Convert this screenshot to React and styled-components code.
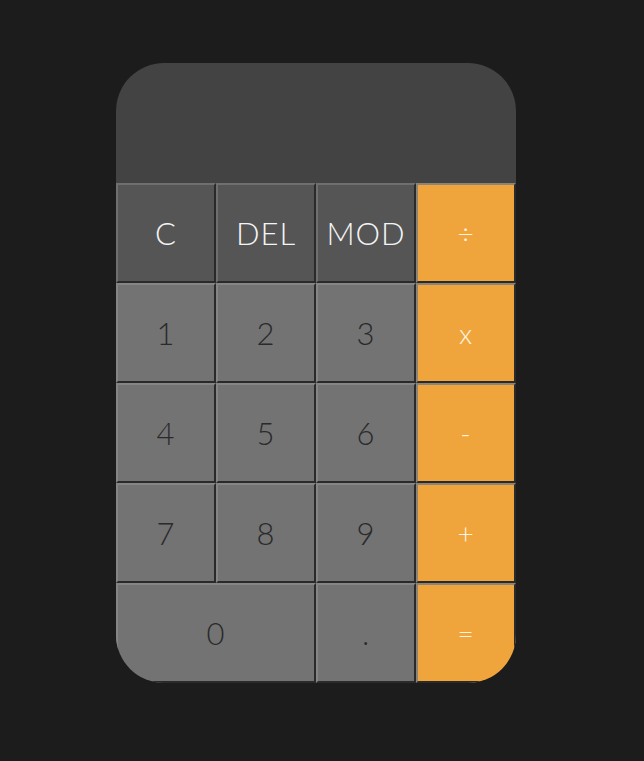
import styled, { createGlobalStyle } from 'styled-components'

const GlobalStyle = createGlobalStyle`
    html, body {
        margin: 0;
        padding: 0;
        background-color: #1c1c1c;
        font-family: "Lato", "Noto Sans", sans-serif;
    }
`

const colors = {
    page: '#1c1c1c',
    screen: '#434344',
    fn: '#555556',
    num: '#737373',
    op: '#f0a43c',
    dark: '#2a2a2a',
}

// Wrapper that places the calculator on the page
const Page = styled.div`
    min-height: 761px;
    padding: 63px 0 0 116px;
    box-sizing: border-box;
`

const Calculator = styled.div`
    display: grid;
    grid-template-columns: repeat(4, 100px);
    grid-template-rows: 120px repeat(5, 100px);
    width: 400px;
    border-radius: 48px;
    overflow: hidden;
    background-color: ${colors.page};
`

const Screen = styled.div`
    grid-column: 1 / -1;
    background-color: ${colors.screen};
`

const variants = {
    fn: { bg: colors.fn, light: '#6f6f70', color: '#f4f4f4', size: '31px' },
    num: { bg: colors.num, light: '#858585', color: '#2a2a2a', size: '31px' },
    op: { bg: colors.op, light: '#8d8478', color: '#fff4e0', size: '28px' },
}

const Key = styled.button`
    grid-column: span ${(p) => p.$span || 1};
    box-sizing: border-box;
    display: flex;
    align-items: center;
    justify-content: center;
    margin: 0;
    padding: 0;
    border-style: solid;
    border-width: 2px;
    border-top-color: ${(p) => variants[p.$kind].light};
    border-left-color: ${(p) => variants[p.$kind].light};
    border-right-color: ${colors.dark};
    border-bottom-color: ${colors.dark};
    background-color: ${(p) => variants[p.$kind].bg};
    color: ${(p) => variants[p.$kind].color};
    font-family: "Lato", "Noto Sans", sans-serif;
    font-weight: 300;
    font-size: ${(p) => variants[p.$kind].size};
    letter-spacing: 1px;
    cursor: pointer;
`

const keys = [
    { label: 'C', kind: 'fn' },
    { label: 'DEL', kind: 'fn' },
    { label: 'MOD', kind: 'fn' },
    { label: '÷', kind: 'op' },
    { label: '1', kind: 'num' },
    { label: '2', kind: 'num' },
    { label: '3', kind: 'num' },
    { label: 'x', kind: 'op' },
    { label: '4', kind: 'num' },
    { label: '5', kind: 'num' },
    { label: '6', kind: 'num' },
    { label: '-', kind: 'op' },
    { label: '7', kind: 'num' },
    { label: '8', kind: 'num' },
    { label: '9', kind: 'num' },
    { label: '+', kind: 'op' },
    { label: '0', kind: 'num', span: 2 },
    { label: '.', kind: 'num' },
    { label: '=', kind: 'op' },
]

function App() {
    return (
        <Page>
            <GlobalStyle />
            <Calculator>
                <Screen />
                {keys.map((k) => (
                    <Key key={k.label} $kind={k.kind} $span={k.span}>
                        {k.label}
                    </Key>
                ))}
            </Calculator>
        </Page>
    )
}
export default App
